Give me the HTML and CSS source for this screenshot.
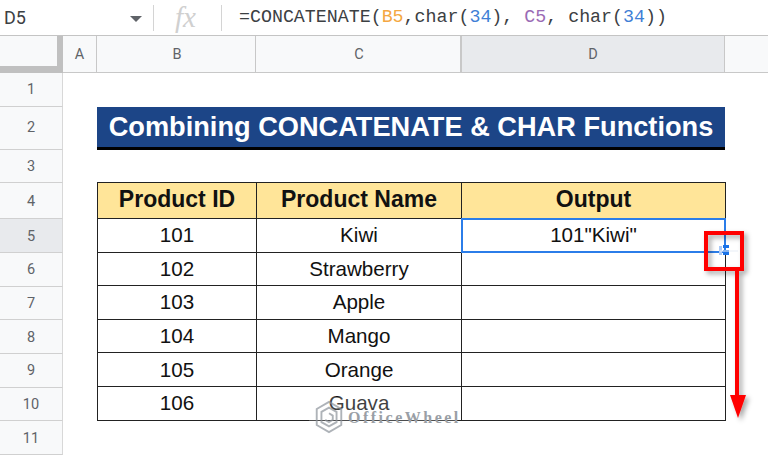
FILE: index.html
```html
<!DOCTYPE html>
<html lang="en">
<head>
<meta charset="utf-8">
<title>Combining CONCATENATE &amp; CHAR Functions</title>
<link rel="stylesheet" href="styles.css">
</head>
<body>
<div class="app">
  <div class="formula-bar">
    <div class="name-box"><span>D5</span><i class="caret"></i></div>
    <div class="divider"></div>
    <div class="fx">fx</div>
    <div class="divider"></div>
    <div class="formula">=CONCATENATE(<span class="ref-b">B5</span>,char(<span class="num">34</span>), <span class="ref-c">C5</span>, char(<span class="num">34</span>))</div>
  </div>
  <div class="sheet">
    <div class="corner"></div>
    <div class="col-head col-a">A</div>
    <div class="col-head col-b">B</div>
    <div class="col-head col-c">C</div>
    <div class="col-head col-d active">D</div>
    <div class="col-head col-e"></div>

    <div class="row-heads">
      <div class="row-head r-std">1</div>
      <div class="row-head r-title">2</div>
      <div class="row-head r-std">3</div>
      <div class="row-head r-hdr">4</div>
      <div class="row-head r-std active">5</div>
      <div class="row-head r-std">6</div>
      <div class="row-head r-std">7</div>
      <div class="row-head r-std">8</div>
      <div class="row-head r-std">9</div>
      <div class="row-head r-std">10</div>
      <div class="row-head r-std">11</div>
    </div>

    <div class="canvas">
      <div class="title">Combining CONCATENATE &amp; CHAR Functions</div>
      <div class="table">
        <div class="th">Product ID</div><div class="th">Product Name</div><div class="th">Output</div>
        <div class="td">101</div><div class="td">Kiwi</div><div class="td selected">101"Kiwi"</div>
        <div class="td">102</div><div class="td">Strawberry</div><div class="td"></div>
        <div class="td">103</div><div class="td">Apple</div><div class="td"></div>
        <div class="td">104</div><div class="td">Mango</div><div class="td"></div>
        <div class="td">105</div><div class="td">Orange</div><div class="td"></div>
        <div class="td">106</div><div class="td">Guava</div><div class="td"></div>
      </div>
    </div>
  </div>

  <div class="watermark">
    <svg class="wm-logo" width="30" height="34" viewBox="0 0 30 36" fill="none" stroke="#8d939b" stroke-width="2">
      <path d="M15 2 28 9.500V26.500L15 34 2 26.500V9.500Z"/>
      <path d="M15 8 23 12.500V23.500L15 28 7 23.500V12.500Z"/>
      <path d="M15 14 19 16.500V21L15 23.500 11 21"/>
    </svg>
    <span class="wm-text">OfficeWheel</span>
  </div>

  <svg class="annotation" width="768" height="455" viewBox="0 0 768 455" fill="none">
    <defs>
      <filter id="soft" x="-30%" y="-10%" width="180%" height="130%">
        <feDropShadow dx="3" dy="3" stdDeviation="2.500" flood-color="#000" flood-opacity="0.35"/>
      </filter>
    </defs>
    <rect x="723" y="250" width="6" height="5" fill="#1a73e8"/>
    <rect x="723" y="245" width="6" height="3" fill="#1a73e8"/>
    <rect x="719" y="246" width="3" height="9" fill="#a9c9f7"/>
    <path d="M720 251H738" stroke="#e8eef7" stroke-width="1.500" opacity="0.7"/>
    <g filter="url(#soft)">
      <rect x="706" y="233" width="36" height="36" stroke="#ff0000" stroke-width="4"/>
      <path d="M737 269V400" stroke="#ff0000" stroke-width="4"/>
      <path d="M730 395H746L738 418Z" fill="#ff0000"/>
    </g>
  </svg>
</div>
</body>
</html>
```
FILE: styles.css
```css
* { box-sizing: border-box; }
html, body { margin: 0; padding: 0; }
body { width: 768px; height: 455px; overflow: hidden; background: #fff; font-family: Roboto, "Liberation Sans", sans-serif; }
.app { position: relative; width: 768px; height: 455px; overflow: hidden; }

.formula-bar { height: 36px; display: flex; align-items: center; border-bottom: 1px solid #c4c4c4; background: #fff; }
.name-box { width: 153px; height: 35px; display: flex; align-items: center; justify-content: space-between; padding: 0 11px 0 4px; font-size: 18px; color: #3c4043; }
.caret { width: 0; height: 0; border-left: 6px solid transparent; border-right: 6px solid transparent; border-top: 6px solid #5f6368; margin-top: 2px; }
.divider { width: 1px; height: 26px; background: #d4d4d4; }
.fx { width: 67px; text-align: center; font-family: "Liberation Serif", serif; font-style: italic; font-size: 29px; color: #d0d0d0; line-height: 35px; padding-right: 4px; }
.formula { padding-left: 17px; font-family: "Liberation Mono", monospace; font-size: 18.300px; color: #3c4043; white-space: nowrap; line-height: 35px; }
.ref-b { color: #f4a742; }
.ref-c { color: #9a6bb5; }
.num { color: #3f7fd6; }

.sheet { display: grid; grid-template-columns: 63px 34px 159px 205px 264px 43px; grid-template-rows: 37px 382px; }
.corner { background: #f8f9fa; border-right: 6px solid #c0c0c0; border-bottom: 7px solid #c0c0c0; }
.col-head { background: #f8f9fa; border-right: 1px solid #c8c8c8; border-bottom: 1px solid #c8c8c8; display: flex; align-items: center; justify-content: center; font-size: 14.500px; color: #5f6368; padding-top: 1px; }
.col-b, .col-c { padding-left: 2px; }
.col-head.active { background: #e8eaed; border-left: 1px solid #c8c8c8; }
.col-e { border-right: 0; }

.row-heads { display: flex; flex-direction: column; width: 63px; }
.row-head { background: #f8f9fa; border-right: 1px solid #d8d8d8; border-bottom: 1px solid #d0d0d0; display: flex; align-items: center; justify-content: center; font-size: 14.500px; color: #5f6368; padding-top: 1px; }
.row-head.active { background: #e8eaed; }
.r-std { height: 33.700px; }
.r-title { height: 43px; padding-top: 0; padding-bottom: 1px; }
.r-hdr { height: 36px; }

.canvas { grid-column: 2 / 7; padding: 34px 0 0 34px; }
.title { width: 628px; height: 43px; margin-bottom: 32px; background: #1c4587; border-bottom: 3px solid #000; color: #fff; font-family: "Liberation Sans", sans-serif; font-weight: 700; font-size: 27.200px; line-height: 39px; text-align: center; white-space: nowrap; }

.table { width: 629px; display: grid; grid-template-columns: 159px 205px 264px; grid-template-rows: 36px repeat(6, 33.600px); border: 1px solid #222; border-width: 1px 0 0 1px; font-family: "Liberation Sans", sans-serif; color: #111; }
.th, .td { display: flex; align-items: center; justify-content: center; border-right: 1.500px solid #222; border-bottom: 1.500px solid #222; }
.th { background: #ffe599; font-weight: 700; font-size: 23px; padding-bottom: 2px; }
.td { font-size: 20.600px; background: #fff; }
.td.selected { border: 2px solid #2b7de9; margin: -1px 0 0 -1px; }

.watermark { position: absolute; left: 309px; top: 397px; width: 148px; height: 37px; padding: 3px 0 0 5px; display: flex; align-items: center; gap: 4px; background: rgba(255, 255, 255, 0.2); }
.wm-logo { opacity: 0.7; flex: none; }
.wm-text { font-family: "Liberation Serif", serif; font-weight: 700; font-size: 16px; letter-spacing: 2.500px; color: #9a9fa6; margin-top: 1px; white-space: nowrap; }

.annotation { position: absolute; left: 0; top: 0; pointer-events: none; }
```
